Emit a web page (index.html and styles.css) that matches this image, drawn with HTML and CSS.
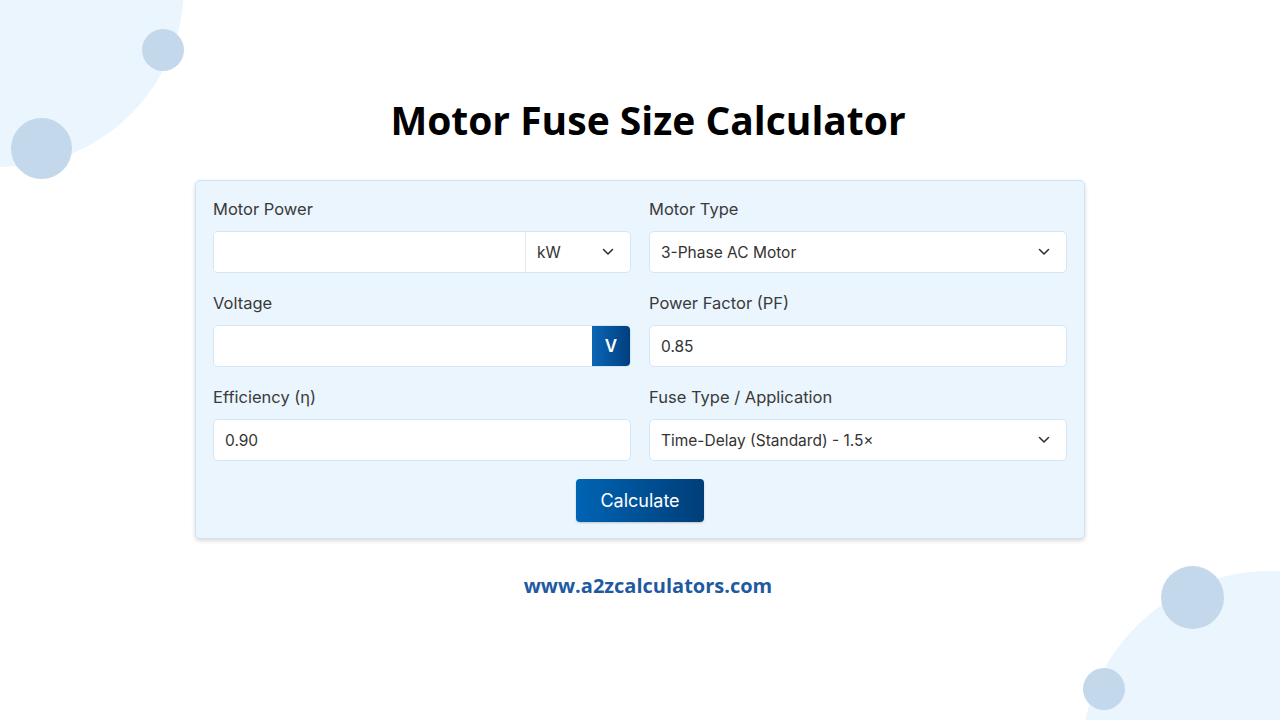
FILE: index.html
```html
<!DOCTYPE html>
<html lang="en">
<head>
    <meta charset="UTF-8">
    <meta name="viewport" content="width=device-width, initial-scale=1.0">
    <title>Motor Fuse Size Calculator</title>
    <link rel="stylesheet" href="styles.css">
</head>
<body>
    <div class="backdrop">
        <div class="bubble big-tl"></div>
        <div class="bubble dot dot-1"></div>
        <div class="bubble dot dot-2"></div>
        <div class="bubble big-br"></div>
        <div class="bubble dot dot-3"></div>
        <div class="bubble dot dot-4"></div>
    </div>

    <main class="page">
        <h1>Motor Fuse Size Calculator</h1>
        <div class="card">
            <div class="form-grid">
                <div class="field">
                    <label>Motor Power</label>
                    <div class="group">
                        <input type="text" class="grow">
                        <div class="select unit">
                            <span>kW</span>
                            <svg class="chev" width="12" height="8" viewBox="0 0 12 8"><path d="M1.5 1.5 6 6l4.5-4.5" fill="none" stroke="#333" stroke-width="1.6" stroke-linecap="round" stroke-linejoin="round"/></svg>
                        </div>
                    </div>
                </div>
                <div class="field">
                    <label>Motor Type</label>
                    <div class="select box">
                        <span>3-Phase AC Motor</span>
                        <svg class="chev" width="12" height="8" viewBox="0 0 12 8"><path d="M1.5 1.5 6 6l4.5-4.5" fill="none" stroke="#333" stroke-width="1.6" stroke-linecap="round" stroke-linejoin="round"/></svg>
                    </div>
                </div>
                <div class="field">
                    <label>Voltage</label>
                    <div class="group">
                        <input type="text" class="grow">
                        <div class="addon">V</div>
                    </div>
                </div>
                <div class="field">
                    <label>Power Factor (PF)</label>
                    <input type="text" class="box" value="0.85">
                </div>
                <div class="field">
                    <label>Efficiency (η)</label>
                    <input type="text" class="box" value="0.90">
                </div>
                <div class="field">
                    <label>Fuse Type / Application</label>
                    <div class="select box">
                        <span>Time-Delay (Standard) - 1.5×</span>
                        <svg class="chev" width="12" height="8" viewBox="0 0 12 8"><path d="M1.5 1.5 6 6l4.5-4.5" fill="none" stroke="#333" stroke-width="1.6" stroke-linecap="round" stroke-linejoin="round"/></svg>
                    </div>
                </div>
            </div>
            <div class="actions">
                <button>Calculate</button>
            </div>
        </div>
        <p class="site">www.a2zcalculators.com</p>
    </main>
</body>
</html>
```

FILE: styles.css
```css
body {
    margin: 0;
    height: 720px;
    overflow: hidden;
    position: relative;
    background: #ffffff;
    font-family: Inter, "Noto Sans", sans-serif;
    color: #333;
}
.backdrop {
    position: absolute;
    left: 0;
    top: 0;
    width: 1280px;
    height: 720px;
    overflow: hidden;
}
.bubble {
    position: absolute;
    border-radius: 50%;
    background: #eaf5fe;
}
.big-tl {
    left: -178px;
    top: -195px;
    width: 362px;
    height: 362px;
}
.big-br {
    left: 1081px;
    top: 571px;
    width: 378px;
    height: 378px;
}
.dot {
    background: #c3d8eb;
}
.dot-1 { left: 142px; top: 29px; width: 42px; height: 42px; }
.dot-2 { left: 11px; top: 118px; width: 61px; height: 61px; }
.dot-3 { left: 1161px; top: 566px; width: 63px; height: 63px; }
.dot-4 { left: 1083px; top: 668px; width: 42px; height: 42px; }

.page {
    position: relative;
    display: flex;
    flex-direction: column;
    align-items: center;
    padding-top: 96px;
}
h1 {
    margin: 0 0 0 16px;
    font-family: "Open Sans", sans-serif;
    font-weight: 700;
    font-size: 39px;
    line-height: 48px;
    color: #000;
}
.card {
    margin-top: 36px;
    width: 890px;
    box-sizing: border-box;
    padding: 18px 17px 16px;
    background: #eaf5fe;
    border: 1px solid #cde2f4;
    border-radius: 5px;
    box-shadow: 0 2px 4px rgba(0, 0, 0, 0.15);
}
.form-grid {
    display: grid;
    grid-template-columns: 1fr 1fr;
    column-gap: 18px;
    row-gap: 20px;
}
.field {
    display: flex;
    flex-direction: column;
}
.field label {
    font-size: 16.5px;
    line-height: 20px;
    margin-bottom: 12px;
    color: #3a3a3a;
}
.box, .group {
    height: 42px;
    box-sizing: border-box;
    background: #fff;
    border: 1px solid #d3e6f6;
    border-radius: 5px;
}
input {
    font-family: Inter, "Noto Sans", sans-serif;
    font-size: 15.5px;
    color: #333;
    padding: 0 11px;
    outline: none;
}
.group {
    display: flex;
    overflow: hidden;
}
.grow {
    flex: 1;
    border: none;
    min-width: 0;
}
.select {
    display: flex;
    align-items: center;
    justify-content: space-between;
    font-size: 15.5px;
    padding: 0 16px 0 11px;
}
.unit {
    width: 105px;
    box-sizing: border-box;
    border-left: 1px solid #dde8f2;
}
.addon {
    width: 38px;
    display: flex;
    align-items: center;
    justify-content: center;
    color: #fff;
    font-size: 17px;
    font-weight: 600;
    background: linear-gradient(90deg, #0b66b5, #003f7f);
}
.actions {
    display: flex;
    justify-content: center;
    margin-top: 18px;
}
button {
    width: 128px;
    height: 43px;
    border: none;
    border-radius: 4px;
    color: #fff;
    font-family: Inter, "Noto Sans", sans-serif;
    font-size: 18px;
    background: linear-gradient(90deg, #0064b4, #003e78);
    box-shadow: 0 1px 2px rgba(0, 0, 0, 0.2);
    cursor: pointer;
}
.site {
    margin: 33px 0 0 16px;
    font-family: "Open Sans", sans-serif;
    font-weight: 700;
    font-size: 20px;
    line-height: 28px;
    color: #1f5aa0;
}
```
